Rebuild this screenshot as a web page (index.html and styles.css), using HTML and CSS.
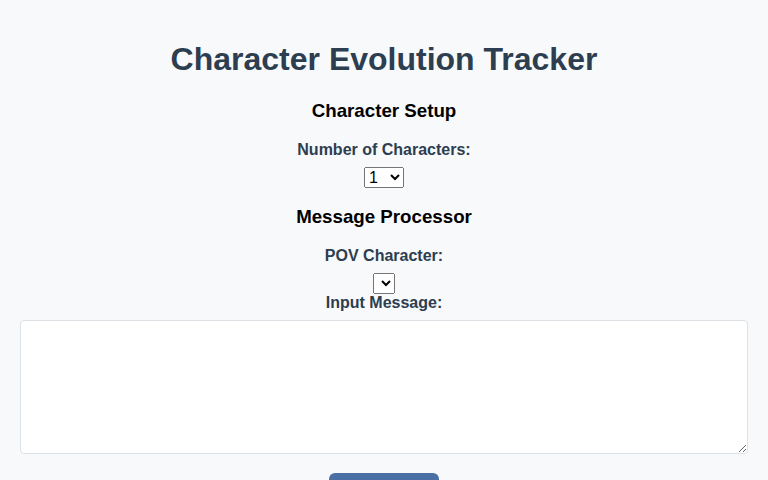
FILE: index.html
```html
<!DOCTYPE html>
<html lang="en">
<head>
<meta charset="utf-8">
<title>Character Evolution Tracker</title>
<link rel="stylesheet" href="styles.css">
</head>
<body>
<div class="container">
  <h1 class="title">Character Evolution Tracker</h1>
  <section class="section">
    <h3 class="section-title">Character Setup</h3>
    <div class="field">
      <label class="label" for="count">Number of Characters:</label>
      <select id="count" class="select">
        <option>1</option>
        <option>2</option>
        <option>3</option>
        <option>4</option>
        <option>5</option>
        <option>6</option>
        <option>7</option>
        <option>8</option>
        <option>9</option>
        <option>10</option>
      </select>
    </div>
  </section>
  <section class="section">
    <h3 class="section-title">Message Processor</h3>
    <div class="field">
      <label class="label" for="pov">POV Character:</label>
      <select id="pov" class="select"></select>
    </div>
    <div class="field">
      <label class="label" for="msg">Input Message:</label>
      <textarea id="msg" class="textarea"></textarea>
    </div>
    <div class="actions">
      <button class="button">Process</button>
    </div>
  </section>
</div>
</body>
</html>
```
FILE: styles.css
```css
html, body {
  margin: 0;
  padding: 0;
  background: #f8f9fa;
}
body {
  font-family: "Liberation Sans", Arial, sans-serif;
  color: #2c3e50;
}
.container {
  padding: 20px;
  text-align: center;
}
.title {
  font-size: 32px;
  margin: 21.44px 0;
  color: #2c3e50;
}
.section-title {
  font-size: 18.72px;
  margin: 18.72px 0;
  color: #000;
}
.label {
  display: block;
  font-weight: bold;
  font-size: 16px;
  margin-bottom: 8px;
  color: #2c3e50;
}
.select {
  font-family: "Liberation Sans", Arial, sans-serif;
  font-size: 16px;
  vertical-align: top;
}
.textarea {
  display: block;
  box-sizing: border-box;
  width: 100%;
  height: 134px;
  margin: 0 0 19px;
  padding: 8px;
  border: 1px solid #dde1e6;
  border-radius: 4px;
  background: #fff;
  font-family: "Liberation Sans", Arial, sans-serif;
  font-size: 14px;
}
.actions {
  display: flex;
  justify-content: center;
}
.button {
  width: 110px;
  height: 36px;
  border: none;
  border-radius: 6px;
  background: #4a6fa5;
  color: #fff;
  font-family: "Liberation Sans", Arial, sans-serif;
  font-size: 14px;
}
```
